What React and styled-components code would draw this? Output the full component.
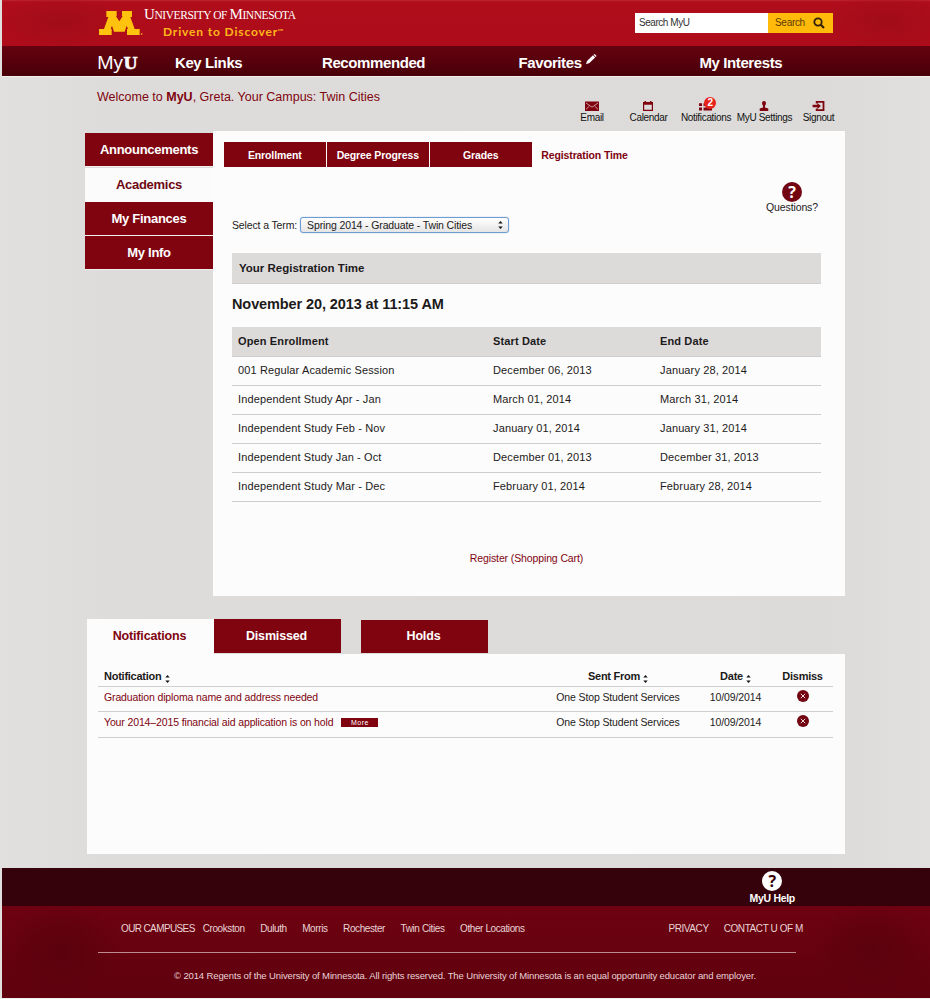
import React from 'react';
import styled, { createGlobalStyle } from 'styled-components';

const maroon = '#7f0410';
const sans = '"Liberation Sans", Arial, Helvetica, sans-serif';

const CAMPUSES = ['Crookston', 'Duluth', 'Morris', 'Rochester', 'Twin Cities', 'Other Locations'];

const SESSIONS = [
  ['001 Regular Academic Session', 'December 06, 2013', 'January 28, 2014'],
  ['Independent Study Apr - Jan', 'March 01, 2014', 'March 31, 2014'],
  ['Independent Study Feb - Nov', 'January 01, 2014', 'January 31, 2014'],
  ['Independent Study Jan - Oct', 'December 01, 2013', 'December 31, 2013'],
  ['Independent Study Mar - Dec', 'February 01, 2014', 'February 28, 2014'],
];

const NOTIFICATIONS = [
  { text: 'Graduation diploma name and address needed' },
  { text: 'Your 2014–2015 financial aid application is on hold', more: true },
];

const BlockM = () => (
  <svg width="45" height="25" viewBox="0 0 135 75">
    <path
      fill="#ffc20e"
      d="M22 0H53V16H51L61 31L71 16H69V0H99V18H94L107 54H122V72H84V54H87L83 44L77 62H45L39 44L35 54H38V72H0V54H15L28 18H22Z"
    />
    <circle cx="128" cy="69" r="2.5" fill="#ffc20e" />
  </svg>
);

const SearchIcon = () => (
  <svg width="12" height="12" viewBox="0 0 12 12">
    <circle cx="5" cy="5" r="3.7" fill="none" stroke="#33220a" strokeWidth="1.8" />
    <path d="M7.8 7.8L11 11" stroke="#33220a" strokeWidth="2.2" />
  </svg>
);

const PencilIcon = () => (
  <svg width="11" height="11" viewBox="0 0 11 11">
    <path fill="#fff" d="M0 10.2L1 6.9L6.9 1.3L9.2 3.6L3.4 9.1ZM7.5 0.8L8.7 0L10.6 1.9L9.7 3Z" />
  </svg>
);

const EmailIcon = () => (
  <svg width="14" height="10" viewBox="0 0 14 10">
    <path fill={maroon} d="M0 0.5H14V10H0Z" />
    <path fill="none" stroke="#ecd5d6" strokeWidth="0.7" d="M1 2L7 6.2L13 2M1 8.3L4.3 5.2M13 8.3L9.7 5.2" />
  </svg>
);

const CalendarIcon = () => (
  <svg width="10" height="10" viewBox="0 0 10 10">
    <path fill={maroon} fillRule="evenodd" d="M0 1H1.5V0H3V1H7V0H8.5V1H10V10H0ZM1.2 3.8V8.8H8.8V3.8Z" />
  </svg>
);

const ListIcon = () => (
  <svg width="14" height="10" viewBox="0 0 14 10">
    <path fill={maroon} d="M0 2.2H3V5H0ZM0 6.5H3V9.5H0ZM4.5 6.5H13V9.5H4.5ZM4.5 2.2H7V5H4.5Z" />
  </svg>
);

const PersonIcon = () => (
  <svg width="10" height="10" viewBox="0 0 10 10">
    <path fill={maroon} d="M3 2Q3 0 5 0T7 2Q7 3.8 6 4.8V6.6L9.3 7.6V10H0.7V7.6L4 6.6V4.8Q3 3.8 3 2Z" />
  </svg>
);

const SignoutIcon = () => (
  <svg width="13" height="11" viewBox="0 0 13 11">
    <path fill="none" stroke={maroon} strokeWidth="2" d="M4.5 2.7V1H12V10H4.5V8.3" />
    <path fill={maroon} d="M0 4.2H5.2V2.2L9.2 5.5L5.2 8.8V6.8H0Z" />
  </svg>
);

const SortIcon = () => (
  <svg width="5" height="8" viewBox="0 0 5 8">
    <path fill="#111" d="M0.3 2.5L2.5 0L4.7 2.5ZM0.3 5.5L2.5 8L4.7 5.5Z" />
  </svg>
);

const CloseIcon = () => (
  <svg width="12" height="12" viewBox="0 0 12 12">
    <circle cx="6" cy="6" r="6" fill="#720511" />
    <path d="M3.8 3.8L8.2 8.2M8.2 3.8L3.8 8.2" stroke="#f0dada" strokeWidth="1" />
  </svg>
);

const App = () => (
  <>
    <GlobalStyle />
    <Page>
      <Header>
        <BlockM />
        <Brand>
          <University>
            <b>U</b>NIVERSITY OF <b>M</b>INNESOTA
          </University>
          <Tagline>Driven to Discover<sup>sm</sup></Tagline>
        </Brand>
        <Search>
          <SearchField>Search MyU</SearchField>
          <SearchButton>
            Search
            <SearchIcon />
          </SearchButton>
        </Search>
      </Header>

      <Nav>
        <MyU>My<b>U</b></MyU>
        <NavLink>Key Links</NavLink>
        <NavLink>Recommended</NavLink>
        <NavLink>Favorites<PencilIcon /></NavLink>
        <NavLink>My Interests</NavLink>
      </Nav>

      <Greeting>
        <Welcome>Welcome to <b>MyU</b>, Greta. Your Campus: Twin Cities</Welcome>
        <Tools>
          <Tool><EmailIcon />Email</Tool>
          <Tool><CalendarIcon />Calendar</Tool>
          <Tool>
            <BadgeHolder><ListIcon /><Badge>2</Badge></BadgeHolder>
            Notifications
          </Tool>
          <Tool><PersonIcon />MyU Settings</Tool>
          <Tool><SignoutIcon />Signout</Tool>
        </Tools>
      </Greeting>

      <Content>
        <SideTabs>
          <SideTab>Announcements</SideTab>
          <SideTab $active>Academics</SideTab>
          <SideTab>My Finances</SideTab>
          <SideTab>My Info</SideTab>
        </SideTabs>
        <Panel>
          <SubTabs>
            <SubTab>Enrollment</SubTab>
            <SubTab>Degree Progress</SubTab>
            <SubTab>Grades</SubTab>
            <SubTab $active>Registration Time</SubTab>
          </SubTabs>
          <Questions>
            <HelpDot>?</HelpDot>
            Questions?
          </Questions>
          <TermRow>
            Select a Term:
            <Select>
              Spring 2014 - Graduate - Twin Cities
              <SortIcon />
            </Select>
          </TermRow>
          <SectionBar>Your Registration Time</SectionBar>
          <TimeHeading>November 20, 2013 at 11:15 AM</TimeHeading>
          <SessionRow $head>
            <span>Open Enrollment</span>
            <span>Start Date</span>
            <span>End Date</span>
          </SessionRow>
          {SESSIONS.map(([name, start, end]) => (
            <SessionRow key={name}>
              <span>{name}</span>
              <span>{start}</span>
              <span>{end}</span>
            </SessionRow>
          ))}
          <Register>Register (Shopping Cart)</Register>
        </Panel>
      </Content>

      <BottomTabs>
        <BottomTab $active>Notifications</BottomTab>
        <BottomTab>Dismissed</BottomTab>
        <BottomTab $apart>Holds</BottomTab>
      </BottomTabs>
      <NoticePanel>
        <NoticeHead>
          <span>Notification <SortIcon /></span>
          <span>Sent From <SortIcon /></span>
          <span>Date <SortIcon /></span>
          <span>Dismiss</span>
        </NoticeHead>
        {NOTIFICATIONS.map(({ text, more }) => (
          <NoticeRow key={text}>
            <NoticeText>{text}{more && <More>More</More>}</NoticeText>
            <span>One Stop Student Services</span>
            <span>10/09/2014</span>
            <Dismiss><CloseIcon /></Dismiss>
          </NoticeRow>
        ))}
      </NoticePanel>

      <HelpBar>
        <MyUHelp>
          <HelpDot $light>?</HelpDot>
          MyU Help
        </MyUHelp>
      </HelpBar>
      <Footer>
        <FooterLinks>
          <Upper>OUR CAMPUSES</Upper>
          {CAMPUSES.map(name => <span key={name}>{name}</span>)}
          <Legal>
            <span>PRIVACY</span>
            <span>CONTACT U OF M</span>
          </Legal>
        </FooterLinks>
        <Copyright>
          © 2014 Regents of the University of Minnesota. All rights reserved. The University of Minnesota is an equal opportunity educator and employer.
        </Copyright>
      </Footer>
    </Page>
  </>
);

const GlobalStyle = createGlobalStyle`
  * {
    box-sizing: border-box;
  }

  body {
    margin: 0;
    background: #f3eeee;
    font-family: ${sans};
    font-size: 11px;
    color: #1c1a1a;
  }

  svg {
    flex: none;
    display: block;
  }
`;

const Page = styled.div`
  width: 930px;
  height: 998px;
  padding-left: 2px;
  overflow: hidden;
  display: flex;
  flex-direction: column;
  white-space: nowrap;
  background: linear-gradient(90deg, #e1e0de 0, #dddcda 110px, #dcdbd9 830px, #e1e0de 100%);
`;

const Header = styled.header`
  flex: none;
  height: 46px;
  padding: 11px 97px 0 97px;
  display: flex;
  align-items: flex-start;
  color: #fff;
  background:
    radial-gradient(ellipse 65px 26px at 59px 22px, #a00c18, transparent),
    radial-gradient(ellipse 65px 30px at 885px 22px, #a00c18, transparent),
    linear-gradient(#bd2530 0, #b00d1b 2px, #ae0c1a 100%);
`;

const Brand = styled.div`
  margin-top: -5px;
`;

const University = styled.div`
  font-family: "Liberation Serif", serif;
  font-size: 11.5px;
  line-height: 17px;
  letter-spacing: -0.43px;

  b {
    font-size: 15px;
    font-weight: normal;
  }
`;

const Tagline = styled.div`
  margin-left: 19px;
  font: bold 12px/16px Lato, sans-serif;
  letter-spacing: 0.85px;
  color: #ffb81a;

  sup {
    font-size: 4px;
    letter-spacing: 0;
    vertical-align: 5px;
    line-height: 0;
  }
`;

const Search = styled.div`
  margin: 2px 0 0 auto;
  width: 198px;
  height: 20px;
  display: flex;
  font-size: 10px;
  line-height: 20px;
  letter-spacing: -0.4px;
`;

const SearchField = styled.div`
  width: 133px;
  padding-left: 4px;
  background: #fff;
  color: #333;
  letter-spacing: -0.45px;
`;

const SearchButton = styled.div`
  flex: 1;
  padding: 0 8px 0 7px;
  display: flex;
  align-items: center;
  justify-content: space-between;
  letter-spacing: -0.3px;
  background: #ffba0a;
  color: #5c3b06;
`;

const Nav = styled.nav`
  flex: none;
  height: 31px;
  padding-left: 95px;
  border-bottom: 1px solid #f4efef;
  display: grid;
  grid-template-columns: 78px 147px 196.5px 181px 1fr;
  align-items: center;
  color: #fff;
  background: linear-gradient(#65020f, #480009);
`;

const MyU = styled.div`
  display: flex;
  align-items: baseline;
  font: 18.5px/30px "Noto Sans", sans-serif;
  letter-spacing: -0.4px;

  b {
    margin-left: 1px;
    font: bold 16px/30px "DejaVu Serif", serif;
    -webkit-text-stroke: 0.6px #fff;
  }
`;

const NavLink = styled.div`
  display: flex;
  gap: 4px;
  font-size: 15px;
  font-weight: bold;
  line-height: 34px;
  letter-spacing: -0.4px;

  svg {
    margin-top: 8px;
  }
`;

const Greeting = styled.div`
  flex: none;
  height: 54px;
  padding: 11px 10px 0 95px;
  display: flex;
  align-items: flex-start;
`;

const Welcome = styled.div`
  width: 472px;
  font-size: 12.5px;
  line-height: 18px;
  color: ${maroon};
`;

const Tools = styled.div`
  margin-top: 13px;
  display: grid;
  grid-template-columns: 46px 67px 48px 69px 39px;
  justify-items: center;
`;

const Tool = styled.div`
  display: flex;
  flex-direction: column;
  align-items: center;
  font-size: 10px;
  line-height: 13px;
  letter-spacing: -0.33px;
  color: #111;

  svg {
    height: 10px;
  }
`;

const BadgeHolder = styled.div`
  position: relative;
`;

const Badge = styled.span`
  position: absolute;
  top: -4px;
  left: 5px;
  width: 12px;
  height: 12px;
  border-radius: 50%;
  line-height: 12px;
  background: #e8231b;
  color: #fff;
  font-weight: bold;
  text-align: center;
`;

const Content = styled.main`
  flex: none;
  height: 465px;
  margin-left: 83px;
  display: flex;
`;

const SideTabs = styled.div`
  width: 128px;
  padding-top: 2px;
`;

const SideTab = styled.div`
  height: ${props => props.$active ? 34 : 33}px;
  margin-bottom: ${props => props.$active ? 0 : 1.5}px;
  line-height: 33px;
  text-align: center;
  font-size: 13px;
  font-weight: bold;
  letter-spacing: -0.28px;
  color: ${props => props.$active ? '#6d0812' : '#fff'};
  background: ${props => props.$active ? '#fbfbfb' : maroon};
  box-shadow: 0 1px #f3efee;
`;

const Panel = styled.section`
  width: 632px;
  padding: 11px 24px 0 19px;
  background: #fcfcfc;
`;

const SubTabs = styled.div`
  height: 25px;
  margin-left: -8px;
  display: flex;
  gap: 1.5px;
`;

const SubTab = styled.div`
  width: ${props => props.$active ? 103 : 101.5}px;
  line-height: 26px;
  text-align: center;
  font-size: 10.5px;
  font-weight: bold;
  letter-spacing: -0.12px;
  color: ${props => props.$active ? maroon : '#fff'};
  background: ${props => props.$active ? 'none' : maroon};
`;

const Questions = styled.div`
  width: 53px;
  height: 50px;
  margin: 0 2.5px 0 auto;
  padding-top: 15px;
  display: flex;
  flex-direction: column;
  align-items: center;
  font-size: 10.5px;
  line-height: 11px;
  letter-spacing: -0.12px;
`;

const HelpDot = styled.span`
  width: 20px;
  height: 20px;
  flex: none;
  border-radius: 50%;
  text-align: center;
  font: bold 16px/20px "Open Sans", sans-serif;
  letter-spacing: 0;
  color: ${props => props.$light ? '#35010a' : '#fff'};
  background: ${props => props.$light ? '#fff' : '#720511'};
`;

const TermRow = styled.div`
  height: 16px;
  display: flex;
  align-items: center;
  gap: 3px;
  font-size: 10.5px;
  letter-spacing: -0.13px;
`;

const Select = styled.div`
  width: 209px;
  height: 16px;
  padding: 0 5px 0 6px;
  border: 1px solid #6c9cd0;
  border-radius: 3px;
  display: flex;
  align-items: center;
  justify-content: space-between;
  background: linear-gradient(#fff, #e5e5e5);
  box-shadow: 0 0 1px #5d90ca;
`;

const SectionBar = styled.div`
  height: 31px;
  margin-top: 20px;
  padding-left: 7px;
  border-bottom: 1px solid #cfcecd;
  line-height: 31px;
  font-size: 11.5px;
  font-weight: bold;
  background: #dcdbda;
`;

const TimeHeading = styled.h2`
  height: 43px;
  margin: 0;
  font-size: 14.5px;
  line-height: 41px;
  letter-spacing: -0.1px;
`;

const SessionRow = styled.div`
  height: ${props => props.$head ? 30 : 29}px;
  padding: 0 0 2px 6px;
  border-bottom: 1px solid #cecdcd;
  display: grid;
  grid-template-columns: 255px 167px 1fr;
  align-items: center;
  font-size: 11px;
  letter-spacing: 0.13px;
  font-weight: ${props => props.$head ? 'bold' : 'normal'};
  background: ${props => props.$head ? '#dcdbda' : 'none'};
`;

const Register = styled.div`
  margin-top: 49px;
  text-align: center;
  line-height: 14px;
  font-size: 10.5px;
  letter-spacing: -0.12px;
  color: ${maroon};
`;

const BottomTabs = styled.div`
  flex: none;
  height: 35px;
  margin: 23px 0 0 85px;
  display: flex;
  align-items: flex-start;
`;

const BottomTab = styled.div`
  width: 127px;
  height: ${props => props.$active ? 35 : props.$apart ? 33 : 34}px;
  margin-top: ${props => props.$apart ? 1 : 0}px;
  margin-left: ${props => props.$apart ? 20 : 0}px;
  padding-right: 2px;
  line-height: ${props => props.$apart ? 33 : 35}px;
  text-align: center;
  font-size: 12.5px;
  font-weight: bold;
  letter-spacing: -0.15px;
  color: ${props => props.$active ? maroon : '#fff'};
  background: ${props => props.$active ? '#fcfcfc' : maroon};
`;

const NoticePanel = styled.section`
  flex: none;
  width: 758px;
  height: 200px;
  margin-left: 85px;
  padding: 12.5px 12px 0 11px;
  background: #fcfcfc;
`;

const NoticeRow = styled.div`
  height: 25.5px;
  padding: 0 0 4px 6px;
  border-bottom: 1px solid #cfcfcf;
  display: grid;
  grid-template-columns: 430px 168px 67px 1fr;
  align-items: center;
  justify-items: center;
  font-size: 10.5px;
  letter-spacing: -0.13px;

  > :last-child {
    margin-left: 3px;
  }
`;

const NoticeHead = styled(NoticeRow)`
  height: 20px;
  padding-bottom: 0;
  font-size: 11px;
  font-weight: bold;
  letter-spacing: -0.25px;

  span {
    display: flex;
    gap: 3px;
  }

  span:first-child {
    justify-self: start;
  }

  svg {
    margin-top: 5px;
  }
`;

const NoticeText = styled.div`
  justify-self: start;
  display: flex;
  align-items: center;
  color: ${maroon};
`;

const More = styled.span`
  width: 37px;
  height: 9px;
  margin-left: 8px;
  text-align: center;
  font-size: 7px;
  line-height: 9px;
  letter-spacing: 0.5px;
  color: #fff;
  background: ${maroon};
`;

const Dismiss = styled.span`
  padding-bottom: 2px;
`;

const HelpBar = styled.div`
  flex: none;
  height: 38px;
  margin-top: 14px;
  padding: 3px 135px 0 0;
  display: flex;
  justify-content: flex-end;
  background: #35010a;
  color: #fff;
`;

const MyUHelp = styled.div`
  display: flex;
  flex-direction: column;
  align-items: center;
  font-size: 10.5px;
  line-height: 14px;
  font-weight: bold;
  letter-spacing: -0.3px;
`;

const Footer = styled.footer`
  height: 92px;
  flex: none;
  padding: 0 134px 0 96px;
  color: #e8d3d5;
  background:
    radial-gradient(ellipse 60px 50px at 60px 45px, #5a010d, transparent),
    radial-gradient(ellipse 60px 50px at 870px 45px, #5a010d, transparent),
    linear-gradient(#6e0211, #5f010e);
`;

const FooterLinks = styled.div`
  height: 46px;
  padding: 0 0 2px 23px;
  margin-right: -7px;
  display: flex;
  align-items: center;
  gap: 15.5px;
  font-size: 10px;
  letter-spacing: -0.4px;
`;

const Upper = styled.span`
  margin-right: -7.5px;
  letter-spacing: -0.62px;
`;

const Legal = styled.div`
  margin-left: auto;
  display: flex;
  gap: 15px;
  letter-spacing: -0.42px;
`;

const Copyright = styled.div`
  padding: 17px 0 0 36px;
  border-top: 1px solid #bd8b90;
  line-height: 12px;
  text-align: center;
  font-size: 9.5px;
  letter-spacing: -0.13px;
`;

export default App;
